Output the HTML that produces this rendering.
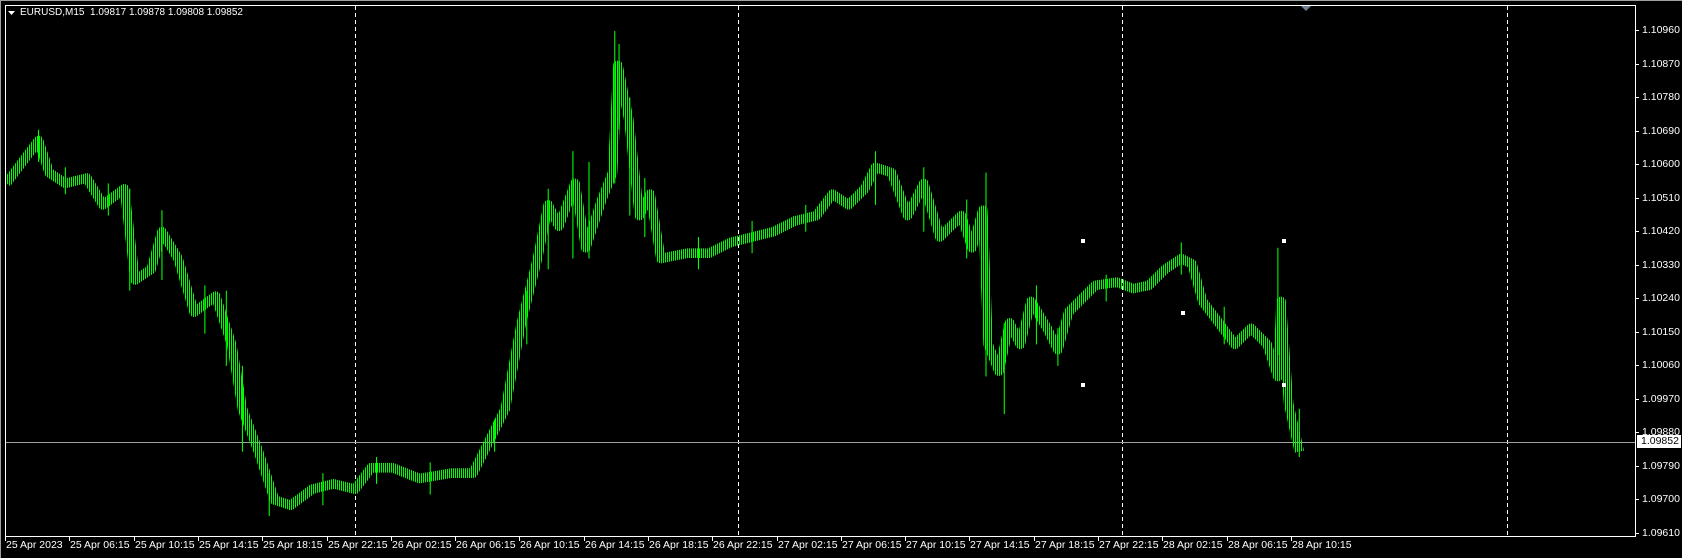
<!DOCTYPE html>
<html><head><meta charset="utf-8"><style>
html,body{margin:0;padding:0;background:#000;}
#w{position:relative;width:1682px;height:558px;background:#000;overflow:hidden;border-top:1px solid #a0a0a0;border-left:1px solid #a0a0a0;box-sizing:border-box;font-family:"Liberation Sans",sans-serif;color:#fff;}
svg{position:absolute;left:0;top:0;}
.t{position:absolute;font-size:10.5px;white-space:nowrap;}
.p{left:1641px;}
.d{top:538px;}
</style></head><body><div id="w">
<svg width="1682" height="558" viewBox="0 0 1682 558">
<defs>
<pattern id="st" width="4" height="4" patternUnits="userSpaceOnUse">
<rect x="0" y="0" width="1" height="4" fill="#00ff00"/><rect x="2" y="0" width="1" height="4" fill="#00ff00"/>
</pattern>
<mask id="m" maskUnits="userSpaceOnUse" x="0" y="0" width="1682" height="558">
<polyline transform="scale(1.073)" fill="none" stroke="#fff" stroke-width="9" stroke-linejoin="round" points="5,170 20,150 35,130 45,160 60,170 80,165 95,190 115,175 125,260 140,250 150,215 165,240 180,290 200,275 215,320 225,380 240,420 255,465 270,470 290,455 310,450 330,455 345,435 365,435 390,445 420,440 440,440 455,410 470,380 485,300 500,240 510,190 520,210 535,170 545,230 560,185 570,160 575,60 585,110 595,200 605,180 615,240 640,235 660,235 680,225 700,220 720,215 740,205 760,200 775,180 790,190 805,175 815,155 830,160 845,200 860,170 875,220 895,200 905,230 915,195 920,320 930,345 940,300 950,320 960,280 975,305 985,325 995,290 1010,275 1020,265 1040,262 1055,268 1070,265 1085,250 1100,240 1110,245 1120,280 1135,300 1150,320 1165,305 1180,320 1190,350 1193,280 1200,375 1210,420"/>
</mask>
</defs>
<rect x="4.5" y="4.5" width="1630" height="531" fill="none" stroke="#fff"/>
<polygon points="7,10 14,10 10.5,14" fill="#fff"/>
<polygon points="1300,5 1310,5 1305,10" fill="#708090"/>
<g stroke="#fff" stroke-dasharray="4,3">
<line x1="354.5" y1="5" x2="354.5" y2="535"/><line x1="737.5" y1="5" x2="737.5" y2="535"/>
<line x1="1121.5" y1="5" x2="1121.5" y2="535"/><line x1="1506.5" y1="5" x2="1506.5" y2="535"/>
</g>
<line x1="5" y1="441.5" x2="1634" y2="441.5" stroke="#a0a0a0"/>
<rect x="5" y="5" width="1629" height="530" fill="url(#st)" mask="url(#m)"/>
<g stroke="#00ff00" stroke-width="1" transform="scale(1.073)">
<line x1="35" y1="120" x2="35" y2="150"/><line x1="60" y1="155" x2="60" y2="180"/><line x1="100" y1="170" x2="100" y2="200"/><line x1="120" y1="175" x2="120" y2="270"/><line x1="150" y1="195" x2="150" y2="260"/><line x1="190" y1="265" x2="190" y2="310"/><line x1="210" y1="270" x2="210" y2="340"/><line x1="225" y1="340" x2="225" y2="420"/><line x1="250" y1="440" x2="250" y2="480"/>
<line x1="300" y1="440" x2="300" y2="470"/><line x1="350" y1="425" x2="350" y2="450"/><line x1="400" y1="430" x2="400" y2="460"/><line x1="460" y1="390" x2="460" y2="420"/><line x1="490" y1="270" x2="490" y2="320"/>
<line x1="510" y1="175" x2="510" y2="250"/><line x1="533" y1="140" x2="533" y2="240"/><line x1="548" y1="150" x2="548" y2="240"/><line x1="572" y1="28" x2="572" y2="170"/><line x1="576" y1="40" x2="576" y2="120"/><line x1="586" y1="90" x2="586" y2="200"/><line x1="600" y1="165" x2="600" y2="220"/>
<line x1="650" y1="220" x2="650" y2="250"/><line x1="700" y1="205" x2="700" y2="235"/><line x1="750" y1="190" x2="750" y2="215"/>
<line x1="815" y1="140" x2="815" y2="190"/><line x1="860" y1="155" x2="860" y2="215"/><line x1="900" y1="185" x2="900" y2="240"/><line x1="918" y1="160" x2="918" y2="350"/><line x1="935" y1="300" x2="935" y2="385"/><line x1="965" y1="265" x2="965" y2="320"/><line x1="985" y1="305" x2="985" y2="340"/>
<line x1="1030" y1="255" x2="1030" y2="280"/><line x1="1100" y1="225" x2="1100" y2="255"/><line x1="1140" y1="285" x2="1140" y2="320"/><line x1="1190" y1="230" x2="1190" y2="330"/><line x1="1210" y1="380" x2="1210" y2="425"/>
</g>
<g fill="#fff"><rect x="1080" y="238" width="4" height="4"/><rect x="1180" y="310" width="4" height="4"/><rect x="1080" y="382" width="4" height="4"/><rect x="1281" y="238" width="4" height="4"/><rect x="1281" y="382" width="4" height="4"/></g>
<path stroke="#fff" d="M1634 29.5h4M1634 63.5h4M1634 96.5h4M1634 130.5h4M1634 163.5h4M1634 197.5h4M1634 230.5h4M1634 264.5h4M1634 297.5h4M1634 331.5h4M1634 364.5h4M1634 398.5h4M1634 431.5h4M1634 465.5h4M1634 498.5h4M1634 532.5h4M4.5 535v5M68.5 535v5M133.5 535v5M197.5 535v5M261.5 535v5M326.5 535v5M390.5 535v5M454.5 535v5M518.5 535v5M583.5 535v5M647.5 535v5M711.5 535v5M776.5 535v5M840.5 535v5M904.5 535v5M968.5 535v5M1033.5 535v5M1097.5 535v5M1161.5 535v5M1226.5 535v5M1290.5 535v5"/>
</svg>
<div class="t" style="left:19px;top:6px;font-size:10px">EURUSD,M15&nbsp; 1.09817 1.09878 1.09808 1.09852</div>
<div class="t p" style="top:23px">1.10960</div><div class="t p" style="top:57px">1.10870</div><div class="t p" style="top:90px">1.10780</div><div class="t p" style="top:124px">1.10690</div><div class="t p" style="top:157px">1.10600</div><div class="t p" style="top:191px">1.10510</div><div class="t p" style="top:224px">1.10420</div><div class="t p" style="top:258px">1.10330</div><div class="t p" style="top:291px">1.10240</div><div class="t p" style="top:325px">1.10150</div><div class="t p" style="top:358px">1.10060</div><div class="t p" style="top:392px">1.09970</div><div class="t p" style="top:425px">1.09880</div><div class="t p" style="top:459px">1.09790</div><div class="t p" style="top:492px">1.09700</div><div class="t p" style="top:526px">1.09610</div>
<div class="t" style="left:1636px;top:434px;width:44px;height:13px;background:#fff;color:#000;padding-left:4px;box-sizing:border-box;line-height:13px">1.09852</div>
<div class="t d" style="left:5px">25 Apr 2023</div><div class="t d" style="left:69px">25 Apr 06:15</div><div class="t d" style="left:134px">25 Apr 10:15</div><div class="t d" style="left:198px">25 Apr 14:15</div><div class="t d" style="left:262px">25 Apr 18:15</div><div class="t d" style="left:327px">25 Apr 22:15</div><div class="t d" style="left:391px">26 Apr 02:15</div><div class="t d" style="left:455px">26 Apr 06:15</div><div class="t d" style="left:519px">26 Apr 10:15</div><div class="t d" style="left:584px">26 Apr 14:15</div><div class="t d" style="left:648px">26 Apr 18:15</div><div class="t d" style="left:712px">26 Apr 22:15</div><div class="t d" style="left:777px">27 Apr 02:15</div><div class="t d" style="left:841px">27 Apr 06:15</div><div class="t d" style="left:905px">27 Apr 10:15</div><div class="t d" style="left:969px">27 Apr 14:15</div><div class="t d" style="left:1034px">27 Apr 18:15</div><div class="t d" style="left:1098px">27 Apr 22:15</div><div class="t d" style="left:1162px">28 Apr 02:15</div><div class="t d" style="left:1227px">28 Apr 06:15</div><div class="t d" style="left:1291px">28 Apr 10:15</div>
</div></body></html>
